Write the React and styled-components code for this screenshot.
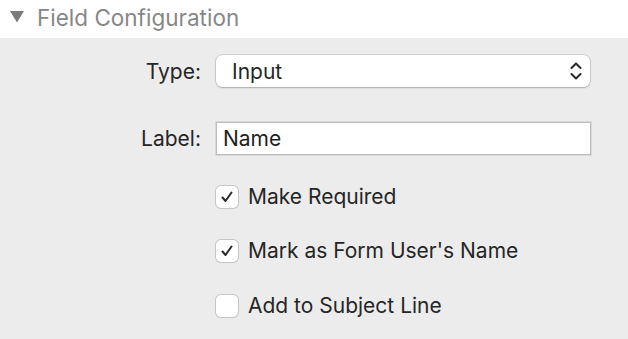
import React from "react";
import styled, { createGlobalStyle } from "styled-components";

const GlobalStyle = createGlobalStyle`
  html, body { margin: 0; padding: 0; background: #ffffff; }
  body { font-family: Inter, "Noto Sans", "Liberation Sans", sans-serif; -webkit-font-smoothing: antialiased; }
  * { box-sizing: border-box; }
`;

const Page = styled.div`
  width: 628px;
  height: 339px;
  display: flex;
  flex-direction: column;
  overflow: hidden;
`;

const Header = styled.div`
  height: 34px;
  margin-bottom: 4px;
  display: flex;
  align-items: center;
  gap: 13px;
  padding-left: 10px;
  color: #878787;
  font-size: 22.5px;
`;

const Panel = styled.div`
  flex: 1;
  background: #ececec;
  padding-top: 17px;
`;

const Row = styled.div`
  display: grid;
  grid-template-columns: 201px 374px;
  column-gap: 15px;
  align-items: center;
  height: ${(p) => p.$h}px;
  margin-top: ${(p) => p.$mt || 0}px;
`;

const FieldLabel = styled.div`
  text-align: right;
  font-size: 21px;
  color: #262626;
`;

const Select = styled.div`
  height: 32px;
  border-radius: 6px;
  background: #ffffff;
  box-shadow: 0 0 0 0.5px rgba(0, 0, 0, 0.22), 0 1px 2px rgba(0, 0, 0, 0.18);
  display: flex;
  align-items: center;
  justify-content: space-between;
  padding: 0 8px 0 16px;
  font-size: 21px;
  color: #262626;
`;

const TextInput = styled.div`
  height: 33px;
  width: 375px;
  background: #ffffff;
  border: 1px solid #bdbdbd;
  box-shadow: 0 0 0 1px #d9d9d9;
  display: flex;
  align-items: center;
  padding-left: 6px;
  font-size: 21px;
  color: #1e1e1e;
`;

const CheckRow = styled.label`
  display: flex;
  align-items: center;
  gap: 10px;
  font-size: 21px;
  color: #262626;
`;

const Box = styled.span`
  width: 22px;
  height: 22px;
  border-radius: 5px;
  background: #ffffff;
  box-shadow: 0 0 0 1px #c6c6c6, 0 1px 1px rgba(0, 0, 0, 0.08);
  display: flex;
  align-items: center;
  justify-content: center;
`;

const Triangle = () => (
  <svg width="14" height="12" viewBox="0 0 14 12">
    <polygon points="0,0 14,0 7,11.5" fill="#7a7a7a" />
  </svg>
);

const UpDown = () => (
  <svg width="12" height="20" viewBox="0 0 12 20">
    <path d="M1.5 7 L6 2.5 L10.5 7" fill="none" stroke="#2a2a2a" strokeWidth="2" strokeLinecap="round" strokeLinejoin="round" />
    <path d="M1.5 13 L6 17.5 L10.5 13" fill="none" stroke="#2a2a2a" strokeWidth="2" strokeLinecap="round" strokeLinejoin="round" />
  </svg>
);

const Check = () => (
  <svg width="14" height="14" viewBox="0 0 14 14">
    <path d="M2.5 7.5 L5.5 11 L11.5 2.5" fill="none" stroke="#2a2a2a" strokeWidth="2" strokeLinecap="round" strokeLinejoin="round" />
  </svg>
);

const Checkbox = ({ checked, children }) => (
  <CheckRow>
    <Box>{checked && <Check />}</Box>
    {children}
  </CheckRow>
);

export default function App() {
  return (
    <Page>
      <GlobalStyle />
      <Header>
        <Triangle />
        <span>Field Configuration</span>
      </Header>
      <Panel>
        <Row $h={32}>
          <FieldLabel>Type:</FieldLabel>
          <Select>
            <span>Input</span>
            <UpDown />
          </Select>
        </Row>
        <Row $h={33} $mt={35}>
          <FieldLabel>Label:</FieldLabel>
          <TextInput>Name</TextInput>
        </Row>
        <Row $h={22} $mt={29}>
          <span />
          <Checkbox checked>Make Required</Checkbox>
        </Row>
        <Row $h={22} $mt={32}>
          <span />
          <Checkbox checked>Mark as Form User's Name</Checkbox>
        </Row>
        <Row $h={22} $mt={33}>
          <span />
          <Checkbox>Add to Subject Line</Checkbox>
        </Row>
      </Panel>
    </Page>
  );
}
